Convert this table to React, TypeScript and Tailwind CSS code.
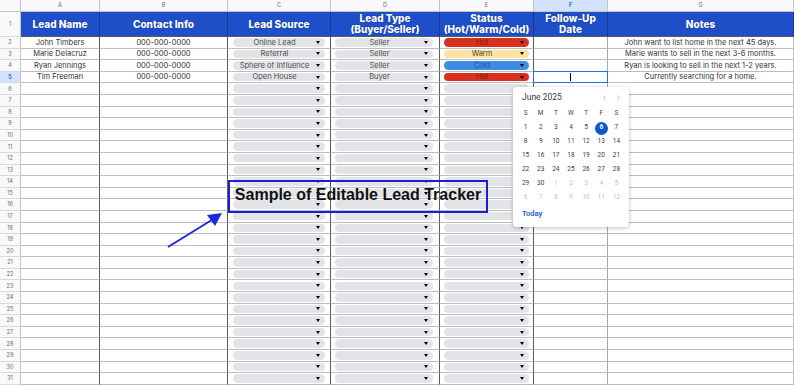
import { ChevronLeft, ChevronRight } from 'lucide-react';

const GRID = 'grid grid-cols-[21px_79px_128px_103px_109px_94px_74px_186px]';
const LETTERS = ['A', 'B', 'C', 'D', 'E', 'F', 'G'];

type Lead = {
  name: string;
  contact: string;
  source: string;
  type: string;
  status: 'Hot' | 'Warm' | 'Cold';
  notes: string;
};

const LEADS: Lead[] = [
  { name: 'John Timbers', contact: '000-000-0000', source: 'Online Lead', type: 'Seller', status: 'Hot', notes: 'John want to list home in the next 45 days.' },
  { name: 'Marie Delacruz', contact: '000-000-0000', source: 'Referral', type: 'Seller', status: 'Warm', notes: 'Marie wants to sell in the next 3-6 months.' },
  { name: 'Ryan Jennings', contact: '000-000-0000', source: 'Sphere of Influence', type: 'Seller', status: 'Cold', notes: 'Ryan is looking to sell in the next 1-2 years.' },
  { name: 'Tim Freeman', contact: '000-000-0000', source: 'Open House', type: 'Buyer', status: 'Hot', notes: 'Currently searching for a home.' },
];

const STATUS_STYLE: Record<string, string> = {
  Hot: 'bg-[#d8321f] text-[#7a1d12]',
  Warm: 'bg-[#fbe3a4] text-[#4f4222]',
  Cold: 'bg-[#3f8de2] text-[#1d52a8]',
  '': 'bg-[#e2e4e8] text-[#4e4e4e]',
};

function Caret() {
  return (
    <span className="w-0 h-0 shrink-0 border-l-[2.5px] border-r-[2.5px] border-t-[3px] border-l-transparent border-r-transparent border-t-black" />
  );
}

function Pill({ label, cls, pad }: { label: string; cls: string; pad: string }) {
  return (
    <div className={`h-full flex items-center ${pad}`}>
      <div className={`flex-1 h-[8.5px] rounded-full flex items-center pr-[5px] ${cls}`}>
        <span className="flex-1 text-center leading-none truncate">{label}</span>
        <Caret />
      </div>
    </div>
  );
}

const cell = 'border-r border-b border-b-[#bdbdbd] h-[11.6px]';

function DataRow({ n, lead }: { n: number; lead?: Lead }) {
  const selected = n === 5;
  return (
    <div className={`${GRID} text-[7.5px] text-[#333]`}>
      <div
        className={`h-[11.6px] border-r border-b border-r-[#c4c4c4] border-b-[#dadada] flex items-center justify-center text-[5.5px] ${
          selected ? 'bg-[#d3e3fd] text-[#0b57d0] font-semibold' : 'bg-[#f8f9fa] text-[#6b6b6b]'
        }`}
      >
        {n}
      </div>
      <div className={`${cell} border-r-[#5c5c5c] flex items-center justify-center leading-none`}>{lead?.name}</div>
      <div className={`${cell} border-r-[#5c5c5c] flex items-center justify-center leading-none`}>{lead?.contact}</div>
      <div className={`${cell} border-r-[#5c5c5c]`}>
        <Pill label={lead?.source ?? ''} cls={STATUS_STYLE['']} pad="pl-[5px] pr-[5px]" />
      </div>
      <div className={`${cell} border-r-[#5c5c5c]`}>
        <Pill label={lead?.type ?? ''} cls={STATUS_STYLE['']} pad="pl-[4px] pr-[6px]" />
      </div>
      <div className={`${cell} border-r-[#5c5c5c]`}>
        <Pill label={lead?.status ?? ''} cls={STATUS_STYLE[lead?.status ?? '']} pad="pl-[4px] pr-[4px]" />
      </div>
      <div className={`${cell} border-r-[#a8a8a8] relative`}>
        {selected && (
          <div className="absolute -inset-y-px -left-px -right-px border-[1.5px] border-[#1a73e8] flex items-center justify-center">
            <span className="w-px h-[8px] bg-black" />
          </div>
        )}
      </div>
      <div className={`${cell} border-r-[#c4c4c4] flex items-center justify-center leading-none`}>{lead?.notes}</div>
    </div>
  );
}

function Calendar() {
  const weeks: { d: number; muted: boolean }[][] = [];
  const all: { d: number; muted: boolean }[] = [];
  for (let d = 1; d <= 30; d++) all.push({ d, muted: false });
  for (let d = 1; d <= 12; d++) all.push({ d, muted: true });
  for (let i = 0; i < 6; i++) weeks.push(all.slice(i * 7, i * 7 + 7));

  return (
    <div className="absolute left-[513px] top-[87px] w-[116px] h-[140px] bg-white rounded-[4px] shadow-[0_1px_4px_rgba(0,0,0,0.25)] font-['Roboto',sans-serif]">
      <div className="h-[20px] flex items-center pl-[9px] pr-[7px]">
        <span className="flex-1 text-[8.5px] text-[#3c3c3c]">June 2025</span>
        <ChevronLeft size={7} className="text-[#8a8a8a] mr-[7px]" strokeWidth={2} />
        <ChevronRight size={7} className="text-[#8a8a8a]" strokeWidth={2} />
      </div>
      <div className="px-[5px]">
        <div className="grid grid-cols-7 h-[14px] items-center text-center text-[6.5px] text-[#444]">
          {['S', 'M', 'T', 'W', 'T', 'F', 'S'].map((w, i) => (
            <span key={i}>{w}</span>
          ))}
        </div>
        {weeks.map((wk, i) => (
          <div key={i} className="grid grid-cols-7 h-[14px] items-center justify-items-center text-[6.5px]">
            {wk.map((c, j) =>
              c.d === 6 && !c.muted ? (
                <span key={j} className="w-[13px] h-[13px] rounded-full bg-[#0b57d0] text-white font-bold flex items-center justify-center">
                  6
                </span>
              ) : (
                <span key={j} className={c.muted ? 'text-[#c2c2c2]' : 'text-[#3c3c3c]'}>
                  {c.d}
                </span>
              )
            )}
          </div>
        ))}
      </div>
      <div className="h-[18px] flex items-center pl-[9px] text-[7.5px] font-semibold text-[#1a5ccf]">Today</div>
    </div>
  );
}

export default function App() {
  const rows = Array.from({ length: 30 }, (_, i) => i + 2);
  return (
    <div className="relative w-[794px] h-[386px] overflow-hidden bg-white font-['Inter',sans-serif]">
      {/* column letters */}
      <div className={`${GRID} h-[12px] bg-[#f8f9fa] text-[5.5px] text-[#6b6b6b]`}>
        <div className="border-r border-b border-[#c4c4c4]" />
        {LETTERS.map((l) => (
          <div
            key={l}
            className={`border-r border-b border-[#c4c4c4] flex items-center justify-center ${
              l === 'F' ? 'bg-[#d3e3fd] text-[#0b57d0] font-semibold' : ''
            }`}
          >
            {l}
          </div>
        ))}
      </div>

      {/* header row */}
      <div className={`${GRID} h-[25px]`}>
        <div className="bg-[#f8f9fa] border-r border-b border-r-[#c4c4c4] border-b-[#dadada] flex items-center justify-center text-[5.5px] text-[#6b6b6b]">
          1
        </div>
        {['Lead Name', 'Contact Info', 'Lead Source', 'Lead Type\n(Buyer/Seller)', 'Status\n(Hot/Warm/Cold)', 'Follow-Up\nDate', 'Notes'].map((h) => (
          <div
            key={h}
            className="bg-[#1e4ec8] border-r border-b border-r-[#173a8f] border-b-[#5c5c5c] flex items-center justify-center text-center whitespace-pre-line text-white font-extrabold text-[10px] leading-[11px] [text-shadow:0_0_1px_#0c2a7a]"
          >
            {h}
          </div>
        ))}
      </div>

      {rows.map((n) => (
        <DataRow key={n} n={n} lead={LEADS[n - 2]} />
      ))}

      {/* annotation */}
      <div className="absolute left-[228px] top-[180px] w-[260px] h-[33px] border-2 border-[#1c1cd8] flex items-center justify-center pb-[3px]">
        <span className="font-['Liberation_Sans',Arial,sans-serif] font-bold text-[16px] text-[#111]">
          Sample of Editable Lead Tracker
        </span>
      </div>
      <svg className="absolute left-[160px] top-[205px]" width="70" height="50" viewBox="0 0 70 50">
        <line x1="8" y1="42" x2="55" y2="13" stroke="#1c2ad6" strokeWidth="2" />
        <polygon points="62,8 47,10 55,21" fill="#1c2ad6" />
      </svg>

      <Calendar />
    </div>
  );
}
